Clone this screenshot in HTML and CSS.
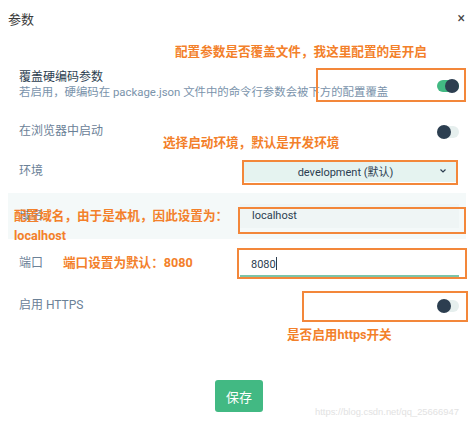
FILE: index.html
```html
<!DOCTYPE html>
<html lang="zh-CN">
<head>
  <meta charset="UTF-8">
  <meta name="viewport" content="width=device-width, initial-scale=1.0">
  <title>参数</title>
  <link rel="stylesheet" href="styles.css">
</head>
<body>
<div class="dialog">
  <div class="header">
    <span class="title">参数</span>
    <span class="close">×</span>
  </div>
  <div class="form">
    <div class="row row-first">
      <div class="text">
        <div class="label label-dark">覆盖硬编码参数</div>
        <div class="desc">若启用，硬编码在 package.json 文件中的命令行参数会被下方的配置覆盖</div>
      </div>
      <span class="switch on"><span class="knob"></span></span>
    </div>
    <div class="row">
      <div class="label">在浏览器中启动</div>
      <span class="switch"><span class="knob"></span></span>
    </div>
    <div class="row">
      <div class="label">环境</div>
      <div class="select">
        <span>development (默认)</span>
        <svg class="chevron" width="8" height="6" viewBox="0 0 8 6"><path d="M1.5 1.5 L4 4 L6.5 1.5" fill="none" stroke="#2c3e50" stroke-width="1.2"/></svg>
      </div>
    </div>
    <div class="row row-band">
      <div class="label">域名</div>
      <div class="input input-grey">localhost</div>
    </div>
    <div class="row">
      <div class="label">端口</div>
      <div class="input input-line">8080<span class="caret"></span></div>
    </div>
    <div class="row row-last">
      <div class="label">启用 HTTPS</div>
      <span class="switch"><span class="knob"></span></span>
    </div>
    <div class="actions">
      <button class="btn">保存</button>
    </div>
  </div>

  <!-- 标注 -->
  <div class="note n1">配置参数是否覆盖文件，我这里配置的是开启</div>
  <div class="note n2">选择启动环境，默认是开发环境</div>
  <div class="note n3">配置域名，由于是本机，因此设置为：<br>localhost</div>
  <div class="note n4">端口设置为默认：8080</div>
  <div class="note n5">是否启用https开关</div>
  <div class="box b1"></div>
  <div class="box b2"></div>
  <div class="box b3"></div>
  <div class="box b4"></div>
  <div class="box b5"></div>

  <div class="mark">https://blog.csdn.net/qq_25666947</div>
</div>
</body>
</html>
```

FILE: styles.css
```css
body {
  margin: 0;
  background-color: #ffffff;
  font-family: Roboto, "Noto Sans CJK SC", sans-serif;
}
.dialog {
  position: relative;
  width: 474px;
  height: 424px;
  background-color: #ffffff;
  overflow: hidden;
}
.header {
  display: flex;
  justify-content: space-between;
  align-items: center;
  height: 36px;
  padding: 0 9px 0 8px;
}
.title {
  font-size: 13px;
  color: #3a3a3a;
}
.close {
  font-size: 14px;
  color: #444444;
}
.form {
  padding: 0 8px;
}
.row {
  display: flex;
  justify-content: space-between;
  align-items: center;
  height: 40px;
  padding: 0 7px 0 11px;
}
.row-first {
  margin-top: 30px;
  height: 38px;
  margin-bottom: 7px;
}
.row-band {
  height: 46px;
  margin: 2px 0 4px;
  background-color: #f4f9f9;
}
.row-last {
  margin-top: 2px;
}
.label {
  font-size: 12px;
  line-height: 15px;
  color: #6b8197;
}
.label-dark {
  color: #2c3e50;
}
.desc {
  font-size: 11.4px;
  line-height: 15px;
  color: #7a93ab;
}
.switch {
  position: relative;
  display: inline-block;
  width: 22px;
  height: 12px;
  border-radius: 6px;
  background-color: #e6efee;
  margin-top: 1px;
}
.switch .knob {
  position: absolute;
  left: 0;
  top: -1px;
  width: 14px;
  height: 14px;
  border-radius: 50%;
  background-color: #2c3e50;
}
.switch.on {
  background-color: #42b983;
}
.switch.on .knob {
  left: 8px;
}
.select {
  position: relative;
  display: flex;
  justify-content: center;
  align-items: center;
  width: 213px;
  height: 22px;
  margin-right: 2px;
  padding-right: 10px;
  box-sizing: border-box;
  background-color: #e5f3f0;
  font-size: 11px;
  color: #2c3e50;
}
.chevron {
  position: absolute;
  right: 10px;
  top: 8px;
}
.input {
  width: 219px;
  height: 24px;
  box-sizing: border-box;
  padding: 0 12px;
  font-size: 11px;
  line-height: 24px;
  color: #2c3e50;
}
.input-grey {
  background-color: #eff5f5;
}
.input-line {
  background-color: #ffffff;
  border-bottom: 2px solid #7cc4a8;
  padding-left: 11px;
  margin-top: 4px;
}
.caret {
  display: inline-block;
  width: 1px;
  height: 13px;
  background-color: #2c3e50;
  vertical-align: -2px;
}
.actions {
  display: flex;
  justify-content: center;
  margin-top: 55px;
  padding-left: 4px;
}
.btn {
  width: 48px;
  height: 32px;
  border: none;
  border-radius: 3px;
  background-color: #42b983;
  color: #ffffff;
  font-size: 13px;
  font-family: Roboto, "Noto Sans CJK SC", sans-serif;
}
.note {
  position: absolute;
  font-size: 12.6px;
  line-height: 20px;
  font-weight: bold;
  color: #f3802a;
  white-space: nowrap;
}
.n1 { left: 175px; top: 42px; }
.n2 { left: 163px; top: 133px; }
.n3 { left: 14px; top: 206px; }
.n4 { left: 63px; top: 253px; }
.n5 { left: 287px; top: 325px; }
.box {
  position: absolute;
  border: 2px solid #f3873a;
  box-sizing: border-box;
}
.b1 { left: 316px; top: 68px; width: 150px; height: 34px; }
.b2 { left: 242px; top: 160px; width: 216px; height: 25px; }
.b3 { left: 238px; top: 207px; width: 228px; height: 27px; }
.b4 { left: 237px; top: 248px; width: 230px; height: 31px; }
.b5 { left: 302px; top: 291px; width: 166px; height: 31px; }
.mark {
  position: absolute;
  left: 315px;
  top: 406px;
  font-family: "Liberation Sans", Arial, sans-serif;
  font-size: 9.4px;
  color: #e2e2e2;
}
```
